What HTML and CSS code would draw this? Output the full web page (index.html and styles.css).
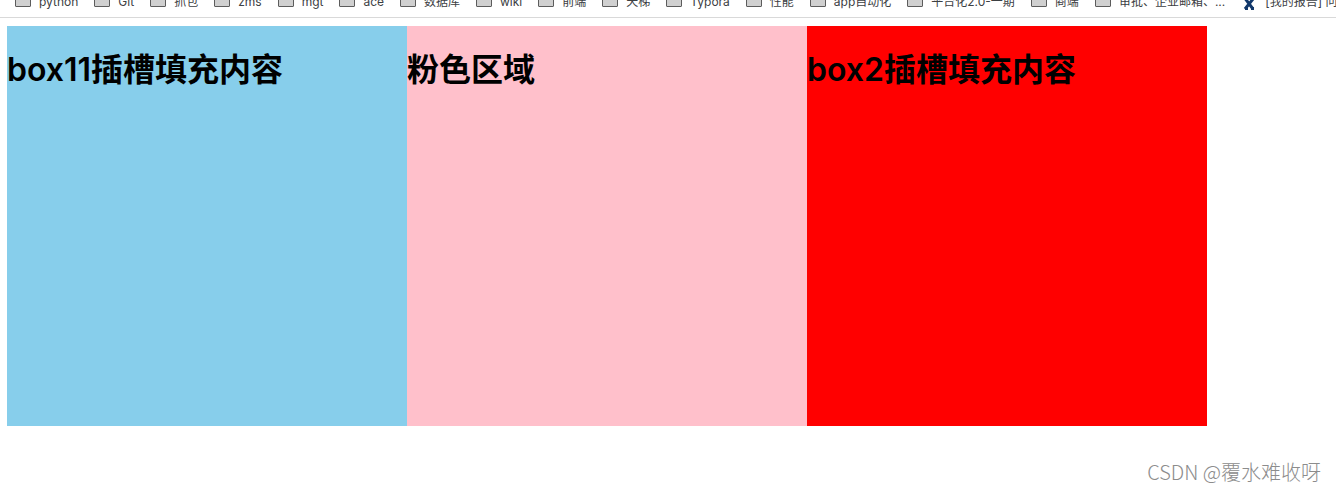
FILE: index.html
```
<!DOCTYPE html>
<html lang="zh-CN">
<head>
    <meta charset="UTF-8">
    <title>插槽</title>
    <link rel="stylesheet" href="styles.css">
</head>
<body>
    <nav class="bookmarks">
        <a class="folder" href="#">python</a>
        <a class="folder" href="#">Git</a>
        <a class="folder" href="#">抓包</a>
        <a class="folder" href="#">zms</a>
        <a class="folder" href="#">mgt</a>
        <a class="folder" href="#">ace</a>
        <a class="folder" href="#">数据库</a>
        <a class="folder" href="#">wiki</a>
        <a class="folder" href="#">前端</a>
        <a class="folder" href="#">天梯</a>
        <a class="folder" href="#">Typora</a>
        <a class="folder" href="#">性能</a>
        <a class="folder" href="#">app自动化</a>
        <a class="folder" href="#">平台化2.0-一期</a>
        <a class="folder" href="#">商端</a>
        <a class="folder" href="#">审批、企业邮箱、...</a>
        <a class="site" href="#">
            <svg width="16" height="16" viewBox="0 0 16 16">
                <path d="M3 3 L12 15 M12 5 L4 15" fill="none" stroke="#12386b" stroke-width="3"/>
                <path d="M4 13h3v3H4z M10 13h3v3h-3z" fill="#12386b"/>
            </svg>
            [我的报告] 问题
        </a>
    </nav>

    <main class="container">
        <div class="box box11">
            <h1>box11插槽填充内容</h1>
        </div>
        <div class="box pink">
            <h1>粉色区域</h1>
        </div>
        <div class="box box2">
            <h1>box2插槽填充内容</h1>
        </div>
    </main>

    <footer class="watermark">CSDN @覆水难收呀</footer>
</body>
</html>
```
FILE: styles.css
```
body {
    margin: 0;
    font-family: Inter, "Noto Sans CJK SC", sans-serif;
    background-color: #ffffff;
}

.bookmarks {
    display: flex;
    align-items: flex-end;
    gap: 16px;
    height: 10px;
    padding: 0 0 7px 15px;
    border-bottom: 1px solid #d9d9d9;
    overflow: hidden;
}

.bookmarks a {
    display: flex;
    flex-shrink: 0;
    align-items: center;
    gap: 8px;
    height: 16px;
    font-size: 12px;
    line-height: 16px;
    color: #3c4043;
    text-decoration: none;
    white-space: nowrap;
}

.folder::before {
    content: "";
    box-sizing: border-box;
    width: 16px;
    height: 10px;
    background-color: #d0d0d0;
    border: 1px solid #5c5c5c;
    border-radius: 1px;
}

.container {
    display: flex;
    padding: 8px 7px;
}

.box {
    flex: 0 1 400px;
    min-height: 400px;
}

.box h1 {
    margin: 21px 0;
    font-size: 32px;
    font-weight: 600;
    line-height: 46px;
    color: #000000;
}

.box11 {
    background-color: skyblue;
}

.pink {
    background-color: pink;
}

.box2 {
    background-color: red;
}

.watermark {
    padding: 24px 15px 0;
    font-family: "Noto Sans CJK SC", sans-serif;
    font-size: 20px;
    font-weight: 300;
    line-height: 28px;
    text-align: right;
    color: #8c8c8c;
}
```
